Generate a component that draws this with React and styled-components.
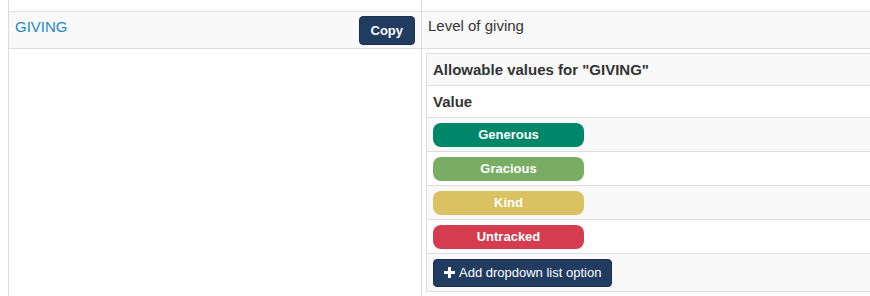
import React from "react";
import styled, { createGlobalStyle } from "styled-components";

const GlobalStyle = createGlobalStyle`
  html, body {
    margin: 0;
    padding: 0;
    background: #fff;
    overflow: hidden;
  }
  body {
    font-family: "Liberation Sans", Arial, sans-serif;
    font-size: 15px;
    color: #333;
  }
`;

const Page = styled.div`
  padding-left: 8px;
  width: 1100px;
`;

const Row = styled.div`
  display: grid;
  grid-template-columns: 412px 1fr;
  border-left: 1px solid #ddd;
  border-bottom: 1px solid #ddd;
  background: ${(p) => (p.$striped ? "#f9f9f9" : "#fff")};
  min-height: ${(p) => p.$height || "auto"};
`;

const Cell = styled.div`
  display: flex;
  align-items: flex-start;
  justify-content: space-between;
  padding: ${(p) => p.$pad || "6px 6px"};
  line-height: 20px;
  & + & {
    border-left: 1px solid #ddd;
  }
`;

const FieldLink = styled.a`
  color: #1f88c9;
  text-decoration: none;
  font-size: 15px;
  padding-top: 1px;
`;

const DarkButton = styled.button`
  display: inline-flex;
  align-items: center;
  gap: 4px;
  background: #213b61;
  color: #fff;
  border: 1px solid #1a3050;
  border-radius: 4px;
  font-family: "Liberation Sans", Arial, sans-serif;
  font-size: 13px;
  font-weight: ${(p) => (p.$bold ? 700 : 400)};
  height: ${(p) => p.$h || "28px"};
  padding: 0 ${(p) => p.$px || "11px"};
  margin-top: ${(p) => p.$mt || "0"};
  cursor: pointer;
`;

const Panel = styled.div`
  border: 1px solid #ddd;
  border-right: none;
  width: 100%;
`;

const PanelRow = styled.div`
  display: flex;
  align-items: center;
  padding: 0 6px;
  height: ${(p) => p.$h || "33px"};
  background: ${(p) => (p.$striped ? "#f9f9f9" : "#fff")};
  font-weight: ${(p) => (p.$bold ? 700 : 400)};
  & + & {
    border-top: 1px solid #ddd;
  }
`;

const Badge = styled.span`
  display: inline-flex;
  align-items: center;
  justify-content: center;
  width: 151px;
  height: 24px;
  border-radius: 8px;
  background: ${(p) => p.$color};
  color: #fff;
  font-weight: 700;
  font-size: 13px;
`;

const PlusIcon = () => (
  <svg width="11" height="11" viewBox="0 0 11 11">
    <path d="M4 0h3v4h4v3H7v4H4V7H0V4h4z" fill="#fff" />
  </svg>
);

const options = [
  { label: "Generous", color: "#00876a" },
  { label: "Gracious", color: "#79ad64" },
  { label: "Kind", color: "#dac161" },
  { label: "Untracked", color: "#d63c50" },
];

export default function App() {
  return (
    <Page>
      <GlobalStyle />
      <Row $height="11px">
        <Cell $pad="0" />
        <Cell $pad="0" />
      </Row>
      <Row $striped>
        <Cell $pad="4px 6px 3px 6px">
          <FieldLink href="#">GIVING</FieldLink>
          <DarkButton $bold $h="29px" $px="11px">
            Copy
          </DarkButton>
        </Cell>
        <Cell $pad="4px 6px">
          <span>Level of giving</span>
        </Cell>
      </Row>
      <Row>
        <Cell $pad="0" />
        <Cell $pad="4px 0 4px 4px">
          <Panel>
            <PanelRow $h="31px" $striped $bold>
              Allowable values for "GIVING"
            </PanelRow>
            <PanelRow $h="31px" $bold>
              Value
            </PanelRow>
            {options.map((o, i) => (
              <PanelRow key={o.label} $striped={i % 2 === 0}>
                <Badge $color={o.color}>{o.label}</Badge>
              </PanelRow>
            ))}
            <PanelRow $h="37px" $striped>
              <DarkButton $px="10px">
                <PlusIcon />
                Add dropdown list option
              </DarkButton>
            </PanelRow>
          </Panel>
        </Cell>
      </Row>
    </Page>
  );
}
